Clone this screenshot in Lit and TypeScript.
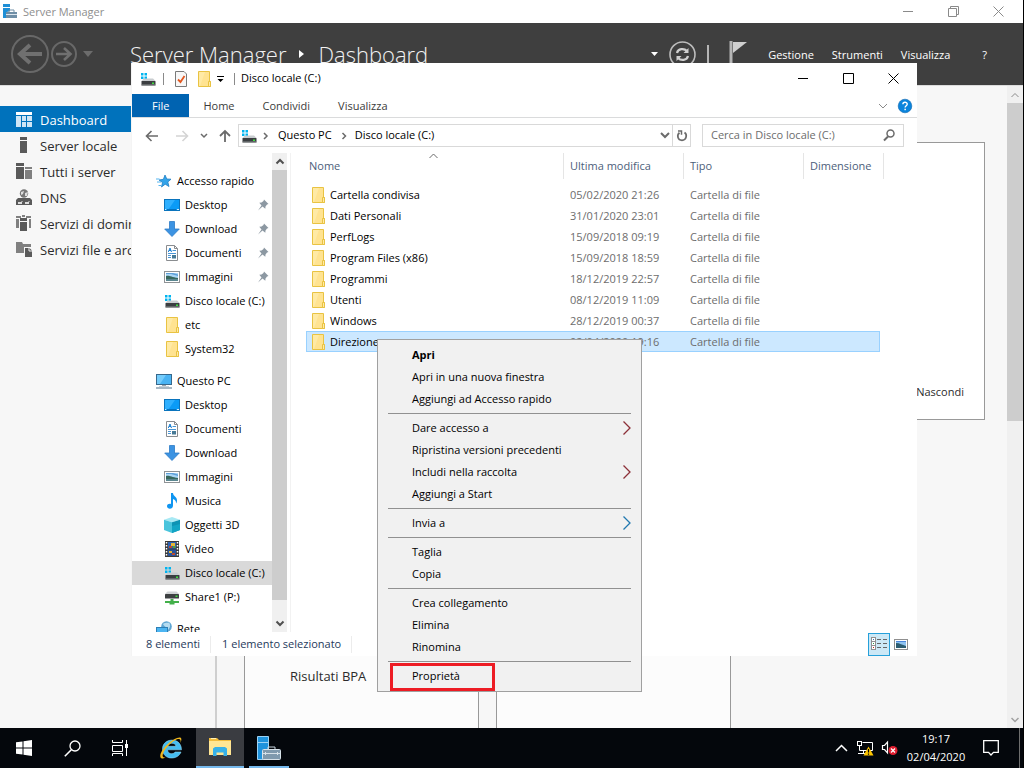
import { LitElement, html, css, svg, nothing } from "lit";
import { customElement, property } from "lit/decorators.js";
import { classMap } from "lit/directives/class-map.js";

const base = css`
  *, *::before, *::after { box-sizing: border-box; }
  button, input, a {
    font: inherit; color: inherit; background: none; border: 0; margin: 0; padding: 0;
    text-decoration: none; border-radius: 0;
  }
  button { display: inline-flex; align-items: center; justify-content: center; }
  svg { display: block; flex: none; }
`;

const icon = (w: number, h: number, body: unknown) =>
  html`<svg width=${w} height=${h} viewBox="0 0 ${w} ${h}" aria-hidden="true">${body}</svg>`;

const line = (w: number, h: number, d: string, stroke = "#000", sw = 1) =>
  icon(w, h, svg`<path d=${d} fill="none" stroke=${stroke} stroke-width=${sw}/>`);

/* ---------- file and place icons, 16 x 16 ---------- */
const icons: Record<string, () => unknown> = {
  folder: () => icon(16, 16, svg`<path d="M2.500.5H13.500V10.500H14.500V15.500H2.500Z" fill="#ffe391" stroke="#e9c342"/>
    <path d="M12.500 15.500V10.500H14.500V15.500Z" fill="#ffeaa8" stroke="#e9c342"/><path d="M3 1H9L4 15H3Z" fill="#ffeaa5"/>`),
  disk: () => icon(16, 16, svg`<path d="M1 2h2.500v2.500H1zM4.500 2H7v2.500H4.500zM1 5.500h2.500V8H1zM4.500 5.500H7V8H4.500z" fill="#00b4f0"/>
    <path d="M4 7.500H13L15.500 10H1.500Z" fill="#c9cdd0"/><rect x="1.500" y="10" width="14" height="4.500" rx=".6" fill="#3b3e41"/>
    <rect x="1.500" y="13.500" width="14" height="1" fill="#8a8d90"/><rect x="12" y="11.500" width="2" height="1.500" fill="#3fe03f"/>`),
  star: () => icon(16, 16, svg`<path d="M9 2L10.800 6 15 6.200 11.800 9 13 13.500 9.200 11.200 5.500 14 6.500 9.500 3 7 7.400 6.300Z" fill="#33a4ea" stroke="#1f7fc4" stroke-width=".8"/>
    <path d="M0 6H3.500M1 9H5M2.500 12.500H5" stroke="#54b5f0" stroke-width="1"/>`),
  desktop: () => icon(16, 16, svg`<rect x=".5" y="2.500" width="15" height="11" fill="#0a9bf7" stroke="#0a74bd"/>
    <path d="M1 3H11L4 13H1Z" fill="#2fb0ff"/><path d="M1 12.500H2M13 12.500H15" stroke="#d6efff"/><path d="M3 12.500H12" stroke="#0572c0"/>`),
  download: () => icon(16, 16, svg`<path d="M5.500.5H10.500V8H15.300L8 15.500 .7 8H5.500Z" fill="#3c93e2" stroke="#2c7bc6" stroke-width=".8"/>`),
  documents: () => icon(16, 16, svg`<path d="M2.500.5H10.500L13.500 3.500V15.500H2.500Z" fill="#fff" stroke="#8a8d90"/>
    <path d="M10.500.5V3.500H13.500" fill="none" stroke="#8a8d90"/><path d="M4.300 7L6 3 7.500 7M5 5.500H7" stroke="#1d7fd0" fill="none"/>
    <path d="M8.500 5.500H12M4 8.500H12M4 10.500H7M4 12.500H7" stroke="#4a96d6"/><rect x="8" y="10" width="4" height="3.500" fill="#477a96"/>`),
  pictures: () => icon(16, 16, svg`<rect x=".5" y="2.500" width="15" height="11" fill="#fff" stroke="#8f9396"/>
    <rect x="2" y="4" width="12" height="8" fill="#a9d5f4"/><path d="M2 7C5 6 7 8 14 9V12H2Z" fill="#38685d"/>
    <path d="M2 5H7L14 7V5.500L9 4H2Z" fill="#5e9fd8"/><path d="M2 11H14" stroke="#7fa6c4"/>`),
  pc: () => icon(16, 16, svg`<rect x=".5" y="1.500" width="15" height="10" fill="#49b3f3" stroke="#37688c"/><path d="M1 2H10L4 11H1Z" fill="#74ccfb"/>
    <path d="M6 12.500H10" stroke="#9aa5ad"/><path d="M0 15H16" stroke="#8ba0b0" stroke-width="1.500"/><path d="M3 13.500H13" stroke="#c8d2d9"/>`),
  music: () => icon(16, 16, svg`<path d="M7 0H9C9 3 13 3.500 13 7.500 13 9 12.500 10 12 10.500 12.300 7.500 10.500 6.500 9 6V12.500C9 17 3 16.500 3 13.300 3 11 5.500 10.500 7 11Z" fill="#0f95f1"/>`),
  objects: () => icon(16, 16, svg`<path d="M8 0L16 2.800 8 5.200 0 2.800Z" fill="#a8e9f4"/><path d="M0 2.800L8 5.200V16L0 13Z" fill="#49c4dc"/>
    <path d="M16 2.800L8 5.200V16L16 13Z" fill="#0e93b4"/><path d="M8 9L16 7V13L8 16Z" fill="#12a5c5"/>`),
  video: () => icon(16, 16, svg`<rect x="1" y="0" width="14" height="16" fill="#3a3a3a"/>
    <path d="M2.500 1V16M13.500 1V16" stroke="#fff" stroke-width="1.500" stroke-dasharray="1.500 1.500"/>
    <rect x="4" y="1" width="8" height="6.500" fill="#2e62b4"/><rect x="4" y="8.500" width="8" height="6.500" fill="#27539c"/>
    <path d="M7 2H11V5H7ZM5 10H8V12H5Z" fill="#e5b735"/><path d="M5 5H8V7H5ZM8 12H11V14H8Z" fill="#b84a32"/><path d="M9 5H11.500V7H9Z" fill="#4fa045"/>`),
  share: () => icon(16, 16, svg`<path d="M3.500 2.500H12.500L15 5H1Z" fill="#d0d3d5"/><rect x="1" y="5" width="14" height="4.500" rx=".6" fill="#3d4042"/>
    <rect x="11.500" y="6.500" width="2" height="1.500" fill="#43e043"/><path d="M6.500 10H9.500V12H15V14H10.500V15.500H5.500V14H1V12H6.500Z" fill="#43b04a"/>`),
  network: () => icon(16, 16, svg`<circle cx="10.500" cy="5.500" r="5.300" fill="#5ea5d2"/><path d="M7 3C9 1 12 2 13 1.500 15 4 14 7 12 9 12 6 8 6 7 3Z" fill="#b6dcf0"/>
    <rect x=".5" y="6.500" width="11" height="7" fill="#4cb5f2" stroke="#2d7fb5"/><path d="M2 15.500H10" stroke="#8ba0b0"/>`),
};

const pin = () => icon(12, 12, svg`<path d="M7 0.500L11.500 5 10 5.500 8.500 7.500 8.300 9.800 5.500 7.500 1 11.500 4.500 6.500 2.300 3.800 4.500 3.500 6.500 2Z" fill="#8c98a2"/>`);

@customElement("server-manager")
class ServerManager extends LitElement {
  static styles = [base, css`
    :host { display: flex; flex-direction: column; height: 100%; background: #f7f7f7; color: #2b2b2b; overflow: hidden; }
    .caption { display: flex; align-items: center; height: 23px; padding: 0 2px 0 3px; background: #fff; color: #8e8e8e; }
    .caption span { flex: 1; padding-left: 5px; }
    .win { width: 45px; height: 20px; }
    .head { display: flex; align-items: center; height: 63px; padding-left: 11px; background: #3f3f3f; border-bottom: 1px solid #dcdcdc; color: #fff; }
    .arrows { display: flex; align-items: center; gap: 2px; width: 119px; }
    .crumb { display: flex; align-items: center; gap: 13px; flex: 1; font-size: 22px; font-weight: 300; color: #f2f2f2; }
    .tools { display: flex; align-items: center; gap: 11px; padding-right: 14px; }
    .menus { display: flex; align-items: center; gap: 18px; padding-right: 36px; }
    .menus button:last-child { margin-left: 14px; }
    .body { display: flex; flex: 1; min-height: 0; }
    .side { width: 217px; flex: none; padding-top: 20px; border-right: 2px solid #cfcfcf; }
    .side a { display: flex; align-items: center; gap: 8px; height: 26px; padding-left: 16px; font-size: 13px; white-space: nowrap; }
    .side a span { padding-top: 2px; }
    .side a.on { background: #0072bc; color: #fff; }
    .main { flex: 1; min-width: 0; padding: 56px 22px 0 27px; overflow: hidden; display: flex; flex-direction: column; gap: 20px; }
    .welcome { height: 278px; flex: none; background: #fff; border: 1px solid #999; display: flex; align-items: flex-end; justify-content: flex-end; padding: 0 20px 20px; }
    .cards { display: grid; grid-template-columns: repeat(auto-fill, 235px); gap: 17px; }
    .card { height: 400px; background: #fcfcfc; border: 1px solid #999; padding: 226px 0 0 45px; font-size: 13px; }
    .bar { width: 16px; flex: none; background: #f0f0f0; display: flex; flex-direction: column; }
    .bar button { height: 17px; }
    .bar .thumb { height: 318px; background: #cdcdcd; }
    .bar .space { flex: 1; }
  `];

  render() {
    const g = "#5a5a5a";
    const side: [string, unknown][] = [
      ["Dashboard", svg`<path d="M0 1H16V4H0Z" fill="#fff"/><path d="M0 5H5V16H0ZM6 5H10V10H6ZM11 5H16V10H11ZM6 11H10V16H6ZM11 11H16V16H11Z" fill="#cfe6f6"/>`],
      ["Server locale", svg`<path d="M4 0H11V3H4ZM4 4H11V16H4Z" fill=${g}/>`],
      ["Tutti i server", svg`<path d="M0 0H8V3H0ZM0 4H8V16H0Z" fill=${g}/><path d="M9 4H16V6H9ZM9 7H16V16H9Z" fill="#808080"/>`],
      ["DNS", svg`<circle cx="8" cy="4.500" r="4.200" fill="#777"/><path d="M5 3L8 2 7 5 5 6ZM9 4L12 3 11 7 9 7Z" fill="#ddd"/><path d="M2 9H14L16 11V16H0V11Z" fill=${g}/><path d="M2 13H6V15H2ZM9 13H13V15H9Z" fill="#ddd"/><path d="M6 12V13M13 12V13" stroke="#ddd"/>`],
      ["Servizi di dominio Active Directory", svg`<path d="M0 1H5V3H0ZM0 4H3V13H0ZM10 1H15V3H10ZM13 4H15V13H13Z" fill="#808080"/><path d="M4 3H11V6H4ZM4 7H11V16H4Z" fill=${g}/><path d="M6 0H9V2H6Z" fill="#808080"/>`],
      ["Servizi file e archiviazione", svg`<path d="M0 1H6L7 3H15V6H8V12H0Z" fill="#808080"/><path d="M9 7H13.500L16 9.500V16H9Z" fill=${g}/><path d="M13 7V10H16" fill="none" stroke="#eee"/>`],
    ];
    return html`
      <div class="caption">
        ${icon(15, 15, svg`<path d="M0 0H7V3H0ZM0 4H7V7L4 8V14H0Z" fill="#1e8fd6"/><path d="M3 8H14V14H3Z" fill="#6f8ea6"/><path d="M6 8V6H11V8" fill="none" stroke="#6f8ea6"/><path d="M3 10.500H14" stroke="#dce6ee"/>`)}
        <span>Server Manager</span>
        <button class="win" aria-label="Riduci a icona">${line(11, 11, "M0 5.5H10", "#8a8a8a")}</button>
        <button class="win" aria-label="Ripristina">${line(11, 11, "M0.5 2.500H8.500V10.500H0.500ZM2.500 2.500V0.500H10.500V8.500H8.500", "#8a8a8a")}</button>
        <button class="win" aria-label="Chiudi">${line(11, 11, "M0.5 0.500L10.500 10.500M10.500 0.500L0.500 10.500", "#8a8a8a")}</button>
      </div>
      <header class="head">
        <div class="arrows">
          <button aria-label="Indietro">${icon(38, 38, svg`<circle cx="19" cy="19" r="18" fill="none" stroke="#686868" stroke-width="2"/><path d="M31 19H10M19 10L9 19L19 28" fill="none" stroke="#707070" stroke-width="4"/>`)}</button>
          <button aria-label="Avanti">${icon(26, 26, svg`<circle cx="13" cy="13" r="12" fill="none" stroke="#686868" stroke-width="2"/><path d="M5 13H19M13 7L19.500 13L13 19" fill="none" stroke="#707070" stroke-width="2.600"/>`)}</button>
          <button aria-label="Cronologia">${icon(18, 8, svg`<path d="M4 1H14L9 7Z" fill="#6c6c6c"/>`)}</button>
        </div>
        <div class="crumb"><span>Server Manager</span>${icon(6, 8, svg`<path d="M0 0L5 4 0 8Z" fill="#fff"/>`)}<span>Dashboard</span></div>
        <div class="tools">
          ${icon(7, 5, svg`<path d="M0 0H7L3.500 4Z" fill="#fff"/>`)}
          <button aria-label="Aggiorna">${icon(27, 27, svg`<circle cx="13.500" cy="13.500" r="12.500" fill="none" stroke="#bdbdbd" stroke-width="1.600"/><path d="M8 12C9 7.500 15 7 18 10M19 15C18 19.500 12 20 9 17" fill="none" stroke="#d0d0d0" stroke-width="2.200"/><path d="M19.500 7V12H14.500ZM7.500 20V15H12.500Z" fill="#d0d0d0"/>`)}</button>
          ${line(2, 18, "M1 0V18", "#b5b5b5", 2)}
          <button aria-label="Notifiche">${icon(34, 28, svg`<path d="M11 1V28" stroke="#b5b5b5" stroke-width="3"/><path d="M13 2H27L13 13Z" fill="#cfcfcf"/>`)}</button>
        </div>
        <div class="menus"><button>Gestione</button><button>Strumenti</button><button>Visualizza</button><button>?</button></div>
      </header>
      <div class="body">
        <nav class="side">
          ${side.map(([label, art], i) => html`<a href="#" class=${classMap({ on: i === 0 })}>${icon(16, 16, art)}<span>${label}</span></a>`)}
        </nav>
        <main class="main">
          <section class="welcome"><button>Nascondi</button></section>
          <div class="cards"><section class="card">Risultati BPA</section><section class="card"></section></div>
        </main>
        <div class="bar">
          <button aria-label="Su">${line(8, 6, "M0.500 5L4 1.500L7.500 5", "#8a8a8a", 1)}</button>
          <div class="thumb"></div><div class="space"></div>
          <button aria-label="Giù">${line(8, 6, "M0.500 1L4 4.500L7.500 1", "#a0a0a0", 1.5)}</button>
        </div>
      </div>`;
  }
}

type Place = { label: string; icon: string; root?: boolean; pinned?: boolean; on?: boolean };
const places: Place[] = [
  { label: "Accesso rapido", icon: "star", root: true },
  { label: "Desktop", icon: "desktop", pinned: true },
  { label: "Download", icon: "download", pinned: true },
  { label: "Documenti", icon: "documents", pinned: true },
  { label: "Immagini", icon: "pictures", pinned: true },
  { label: "Disco locale (C:)", icon: "disk" },
  { label: "etc", icon: "folder" },
  { label: "System32", icon: "folder" },
  { label: "Questo PC", icon: "pc", root: true },
  { label: "Desktop", icon: "desktop" },
  { label: "Documenti", icon: "documents" },
  { label: "Download", icon: "download" },
  { label: "Immagini", icon: "pictures" },
  { label: "Musica", icon: "music" },
  { label: "Oggetti 3D", icon: "objects" },
  { label: "Video", icon: "video" },
  { label: "Disco locale (C:)", icon: "disk", on: true },
  { label: "Share1 (P:)", icon: "share" },
  { label: "Rete", icon: "network", root: true },
];
const files: [string, string][] = [
  ["Cartella condivisa", "05/02/2020 21:26"],
  ["Dati Personali", "31/01/2020 23:01"],
  ["PerfLogs", "15/09/2018 09:19"],
  ["Program Files (x86)", "15/09/2018 18:59"],
  ["Programmi", "18/12/2019 22:57"],
  ["Utenti", "08/12/2019 11:09"],
  ["Windows", "28/12/2019 00:37"],
  ["Direzione", "02/04/2020 19:16"],
];

@customElement("file-explorer")
class FileExplorer extends LitElement {
  static styles = [base, css`
    :host { display: flex; flex-direction: column; background: #fff; color: #000; overflow: hidden; border-left: 1px solid #f4f4f4; white-space: nowrap; }
    .caption { display: flex; align-items: center; height: 31px; padding: 0 1px 0 8px; flex: none; }
    .caption .gap { flex: 1; }
    .rule { width: 1px; height: 12px; background: #8a8a8a; margin: 0 5px 0 7px; }
    .quick { width: 23px; height: 20px; }
    .quick.more { width: 12px; }
    .title { padding: 0 0 2px 1px; }
    .win { width: 45px; height: 30px; }
    .tabs { display: flex; height: 24px; border-bottom: 1px solid #dadbdc; flex: none; color: #3b3b3b; }
    .tabs button { padding: 0 14px; }
    .tabs .file { background: #0063b1; color: #fff; padding: 0 20px; }
    .tabs .gap { flex: 1; }
    .tabs .icon { padding: 0 4px 0 5px; }
    .go { display: flex; align-items: center; height: 35px; padding: 0 13px 0 12px; flex: none; }
    .go .step { width: 15px; margin-right: 15px; height: 20px; }
    .go .step.wide { margin-right: 11px; }
    .go .step.last { margin-right: 6px; }
    .go .recent { margin-right: 9px; }
    .box { display: flex; align-items: center; height: 23px; border: 1px solid #d9d9d9; }
    .address { flex: 1; padding-left: 2px; }
    .address .crumb { padding: 0 9px 2px 8px; }
    .address .gap { flex: 1; }
    .address .chev { width: 14px; }
    .address .reload { width: 18px; height: 21px; border-left: 1px solid #d9d9d9; }
    .search { width: 202px; margin-left: 11px; padding: 0 8px; }
    .search input { flex: 1; min-width: 0; outline: 0; padding-bottom: 2px; }
    .search input::placeholder { color: #6d6d6d; opacity: 1; }
    .body { display: flex; flex: 1; min-height: 0; }
    .places { width: 140px; flex: none; padding-top: 16px; overflow: hidden; }
    .places a { display: flex; align-items: center; gap: 5px; height: 24px; padding-left: 32px; }
    .places a.root { padding-left: 24px; margin-top: 8px; }
    .places a.root:first-child { margin-top: 0; }
    .places a.on { background: #d9d9d9; }
    .places span { flex: 1; padding-bottom: 2px; }
    .places .pin { flex: none; width: 15px; }
    .bar { width: 15px; flex: none; background: #f0f0f0; display: flex; flex-direction: column; }
    .bar button { height: 17px; flex: none; }
    .bar .thumb { flex: 1; background: #cdcdcd; }
    .bar .space { height: 15px; }
    .list { flex: 1; min-width: 0; margin-left: 3px; border-left: 1px solid #f2f2f2; padding-left: 15px; }
    table { display: block; }
    thead, tbody { display: block; }
    tr { display: grid; grid-template-columns: 257px 120px 120px 75px; width: max-content; }
    thead tr { grid-template-columns: 258px 120px 120px 80px; margin-bottom: 5px; }
    th { position: relative; height: 26px; line-height: 26px; font-weight: 400; text-align: left; padding: 0 0 0 6px; color: #4c607a; border-right: 1px solid #e5e5e5; }
    th:first-child { padding-left: 3px; }
    .sort { position: absolute; left: 123px; top: 0; }
    td { display: flex; align-items: center; height: 19px; padding: 0 0 0 6px; color: #6d6d6d; }
    td:first-child { padding-left: 3px; gap: 4px; color: #000; }
    tbody tr { border: 1px solid transparent; }
    tbody tr.on { background: #cce8ff; border-color: #99d1ff; }
    .status { display: flex; align-items: center; height: 24px; padding: 0 5px 0 14px; flex: none; color: #1e395b; }
    .status p { margin: 0 11px 0 0; padding: 0 10px 2px 0; border-right: 1px solid #ececec; }
    .status .gap { flex: 1; }
    .view { width: 22px; height: 23px; }
    .view.on { background: #cce8f6; border: 1px solid #26a0da; }
  `];

  render() {
    return html`
      <div class="caption">
        ${icons.disk()}
        <i class="rule"></i>
        <button class="quick" aria-label="Proprietà">${icon(14, 16, svg`<path d="M1.500.5H10L12.500 3V15.500H1.500Z" fill="#f7f7f7" stroke="#7a7a7a"/><path d="M4 8.500L6.500 11L10.500 5" fill="none" stroke="#e2571e" stroke-width="1.800"/>`)}</button>
        <button class="quick" aria-label="Nuova cartella">${icons.folder()}</button>
        <button class="quick more" aria-label="Personalizza">${icon(8, 8, svg`<path d="M0 1H7V2H0ZM0.500 4H6.500L3.500 7Z" fill="#000"/>`)}</button>
        <i class="rule"></i>
        <span class="title">Disco locale (C:)</span>
        <span class="gap"></span>
        <button class="win" aria-label="Riduci a icona">${line(11, 11, "M0 5.500H10")}</button>
        <button class="win" aria-label="Ingrandisci">${line(11, 11, "M0.500 0.500H10.500V10.500H0.500Z")}</button>
        <button class="win" aria-label="Chiudi">${line(11, 11, "M0.500 0.500L10.500 10.500M10.500 0.500L0.500 10.500")}</button>
      </div>
      <div class="tabs">
        <button class="file">File</button><button>Home</button><button>Condividi</button><button>Visualizza</button>
        <span class="gap"></span>
        <button class="icon" aria-label="Espandi barra multifunzione">${line(10, 6, "M1 1L5 5L9 1", "#8a8a8a")}</button>
        <button class="icon" aria-label="Guida">${icon(16, 16, svg`<circle cx="8" cy="8" r="6.800" fill="#0a84dc" stroke="#0b64ae" stroke-width=".6"/><path d="M5.900 6.300C5.900 3.600 10.200 3.700 10.200 6.200C10.200 7.800 8.100 7.800 8.100 9.600" fill="none" stroke="#fff" stroke-width="1.400"/><rect x="7.400" y="10.700" width="1.500" height="1.500" fill="#fff"/>`)}</button>
      </div>
      <div class="go">
        <button class="step" aria-label="Indietro">${line(14, 12, "M13 6H1.500M6.500 1L1.500 6L6.500 11", "#6b6b6b", 1.6)}</button>
        <button class="step wide" aria-label="Avanti">${line(14, 12, "M1 6H12.500M7.500 1L12.500 6L7.500 11", "#d4d4d4", 1.6)}</button>
        <button class="recent" aria-label="Percorsi recenti">${line(8, 6, "M1 1L4 4L7 1", "#6b6b6b", 1.5)}</button>
        <button class="step last" aria-label="Su">${line(12, 14, "M6 13V2M1 7L6 2L11 7", "#6b6b6b", 1.8)}</button>
        <div class="box address">
          ${icons.disk()}
          ${line(13, 8, "M7 1L10 4L7 7", "#6b6b6b", 1.5)}
          <button class="crumb">Questo PC</button>
          ${line(6, 8, "M1.500 1L4.500 4L1.500 7", "#6b6b6b", 1.5)}
          <button class="crumb">Disco locale (C:)</button>
          <span class="gap"></span>
          <button class="chev" aria-label="Percorsi precedenti">${line(10, 7, "M1 1L5 5L9 1", "#6b6b6b", 2)}</button>
          <button class="reload" aria-label="Aggiorna">${icon(12, 13, svg`<path d="M8.500 3.500C11.500 5.500 10.500 11.300 6 11.300C1.500 11.300 .6 6 3.500 3.800" fill="none" stroke="#6b6b6b" stroke-width="1.700"/><path d="M2 2H5.500V5.800" fill="none" stroke="#6b6b6b" stroke-width="1.500"/>`)}</button>
        </div>
        <label class="box search"><input type="text" aria-label="Cerca" placeholder="Cerca in Disco locale (C:)">
          ${icon(12, 13, svg`<circle cx="7.500" cy="4.500" r="3.500" fill="none" stroke="#6b6b6b" stroke-width="1.500"/><path d="M5 7.500L1 11.500" stroke="#6b6b6b" stroke-width="2"/>`)}
        </label>
      </div>
      <div class="body">
        <nav class="places">
          ${places.map((p) => html`<a href="#" class=${classMap({ root: !!p.root, on: !!p.on })}>${icons[p.icon]()}<span>${p.label}</span>${p.pinned ? html`<i class="pin">${pin()}</i>` : nothing}</a>`)}
        </nav>
        <div class="bar">
          <button aria-label="Su">${line(10, 7, "M1.500 5.500L5 2L8.500 5.500", "#505050", 2)}</button>
          <div class="thumb"></div><div class="space"></div>
          <button aria-label="Giù">${line(10, 7, "M1.500 1.500L5 5L8.500 1.500", "#505050", 2)}</button>
        </div>
        <div class="list">
          <table>
            <thead><tr>
              <th>Nome<span class="sort">${line(9, 6, "M0.500 5L4.500 1L8.500 5", "#6b6b6b")}</span></th>
              <th>Ultima modifica</th><th>Tipo</th><th>Dimensione</th>
            </tr></thead>
            <tbody>
              ${files.map(([name, date], i) => html`<tr class=${classMap({ on: i === files.length - 1 })}>
                <td>${icons.folder()}${name}</td><td>${date}</td><td>Cartella di file</td><td></td></tr>`)}
            </tbody>
          </table>
        </div>
      </div>
      <footer class="status">
        <p>8 elementi</p><p>1 elemento selezionato</p>
        <span class="gap"></span>
        <button class="view on" aria-label="Dettagli">${icon(16, 14, svg`<rect x=".5" y=".5" width="4" height="12" fill="#fff" stroke="#8f8f8f"/><path d="M0 4.500H5M0 8.500H5" stroke="#8f8f8f"/><path d="M2 2.500H3" stroke="#3a7ab8"/><path d="M2 6.500H3" stroke="#2a9a4a"/><path d="M2 10.500H3" stroke="#c22"/><path d="M6 2.500H10M12 2.500H16M6 6.500H10M12 6.500H16M6 10.500H10M12 10.500H16" stroke="#666"/>`)}</button>
        <button class="view" aria-label="Icone grandi">${icon(14, 11, svg`<rect x=".5" y=".5" width="13" height="10" fill="#fff" stroke="#8f8f8f"/><rect x="2" y="2" width="10" height="7" fill="#8fc3f0"/><path d="M2 4C6 4 8 6 12 7V9H2Z" fill="#2c5c70"/><path d="M2 2.500H12" stroke="#4a86dd"/>`)}</button>
      </footer>`;
  }
}

@customElement("context-menu")
class ContextMenu extends LitElement {
  static styles = [base, css`
    :host { display: block; background: #f1f1f1; border: 1px solid #a0a0a0; padding: 4px 0; color: #000; white-space: nowrap; }
    button { display: flex; justify-content: space-between; width: 100%; height: 22px; padding: 0 10px 0 34px; }
    span { padding-bottom: 2px; }
    .main { font-weight: 700; }
    hr { border: 0; border-top: 1px solid #919191; margin: 3px 10px; }
    .marked { position: relative; }
    .marked::after { content: ""; position: absolute; left: 12px; top: -2px; width: 105px; height: 28px; border: 3px solid #ed1c24; }
  `];
  @property({ attribute: false }) groups: string[][] = [
    ["Apri", "Apri in una nuova finestra", "Aggiungi ad Accesso rapido"],
    ["Dare accesso a>", "Ripristina versioni precedenti", "Includi nella raccolta>", "Aggiungi a Start"],
    ["Invia a>"],
    ["Taglia", "Copia"],
    ["Crea collegamento", "Elimina", "Rinomina"],
    ["Proprietà"],
  ];
  render() {
    return this.groups.map((group, g) => html`${g ? html`<hr>` : nothing}${group.map((text) => html`
      <button class=${classMap({ main: text === "Apri", marked: text === "Proprietà" })}><span>${text.replace(">", "")}</span>${text.endsWith(">") ? line(8, 14, "M0.500 0.500L7 7L0.500 13.500", g === 1 ? "#8c3038" : "#2078b0", 1.3) : nothing}</button>`)}`);
  }
}

@customElement("task-bar")
class TaskBar extends LitElement {
  static styles = [base, css`
    :host { display: flex; height: 40px; background: #04070c; color: #fff; }
    .app { width: 48px; height: 40px; margin-right: 1px; }
    .sys { width: 48px; height: 40px; }
    .group { display: flex; margin-left: 3px; }
    .open { background: #3a3c41; border-bottom: 2px solid #76b9ed; }
    .running { background: linear-gradient(#76b9ed, #76b9ed) center bottom / 40px 2px no-repeat; }
    .gap { flex: 1; }
    .tray { display: flex; align-items: center; }
    .tray button { width: 24px; height: 40px; }
    .tray .clock { display: grid; width: 70px; margin-right: 3px; line-height: 18px; text-align: center; align-content: center; }
    .tray .notes { width: 34px; }
    .edge { width: 4px; margin-left: 11px; border-left: 1px solid #6e6e6e; }
  `];
  render() {
    return html`
      <button class="sys" aria-label="Start">${icon(16, 16, svg`<path d="M0 2.300L6.500 1.400V7.500H0ZM7.500 1.200L16 0V7.500H7.500ZM0 8.500H6.500V14.600L0 13.700ZM7.500 8.500H16V16L7.500 14.800Z" fill="#fff"/>`)}</button>
      <button class="sys" aria-label="Cerca">${icon(17, 17, svg`<circle cx="11" cy="6" r="5" fill="none" stroke="#fff" stroke-width="1.300"/><path d="M7.300 9.700L.8 16.200" stroke="#fff" stroke-width="1.600"/>`)}</button>
      <button class="sys" aria-label="Visualizzazione attività">${icon(17, 16, svg`<path d="M.5 0V2.500H10.500V0M.5 16V13.500H10.500V16M.5 5.500H10.500V11.500H.5ZM14.500 0V16" fill="none" stroke="#fff"/><rect x="13" y="4" width="3" height="4" fill="#fff"/>`)}</button>
      <div class="group">
        <button class="app" aria-label="Internet Explorer">${icon(24, 24, svg`<path d="M22.500 13.800H8.500C8.700 18.200 14.500 18.800 16 16H22C19 24.500 3.500 24.500 3.500 13C3.500 1.500 22.500 .5 22.500 13.800ZM8.700 10.300H17C16.500 6.300 9.300 6.300 8.700 10.300Z" fill="#45bdf0" stroke="#9be1fb" stroke-width=".5"/>
          <path d="M21.500 7C23.500 2 22 .5 18 2C12 4 3.500 12 1.500 18C.3 22.500 3 23.500 6.500 21.500C4 22 3 20.500 4 17.500C6 12.500 13 5 18 3.300C21 2.200 22 3.500 21.500 7Z" fill="#f2b91f"/>`)}</button>
        <button class="app open" aria-label="Esplora file">${icon(24, 20, svg`<path d="M1 1H9L11 3H23V18H1Z" fill="#f2bd3d"/><path d="M1 4H23V18H1Z" fill="#ffe694"/><path d="M3 1.500H8" stroke="#fff1b8"/><path d="M5 19V11.500L7 10H17L19 11.500V19H15.500V15.500H8.500V19Z" fill="#37b1e8"/>`)}</button>
        <button class="app running" aria-label="Server Manager">${icon(26, 26, svg`<path d="M1.500 1.500H12.500V24.500H1.500Z" fill="#1f93dd" stroke="#9bd2f5"/><path d="M1.500 7.500H12.500" stroke="#9bd2f5"/><rect x="6.500" y="14.500" width="18" height="10" rx="1" fill="#7f99ad" stroke="#d7e1e8"/><path d="M12 14V12H19V14" fill="none" stroke="#c8d6e0"/><path d="M7 18.500H24M9.500 17V20M21.500 17V20" stroke="#d7e1e8"/>`)}</button>
      </div>
      <span class="gap"></span>
      <div class="tray">
        <button aria-label="Mostra icone nascoste">${line(13, 8, "M1 7L6.500 1.500L12 7", "#fff", 1.5)}</button>
        <button aria-label="Rete">${icon(17, 16, svg`<path d="M5.500 2.500H15.500V10.500H2.500V5M1 13.500H11M6.500 10.500V13.500" fill="none" stroke="#fff"/><rect x=".5" y="1.500" width="4" height="4" fill="#04070c" stroke="#fff"/><path d="M11.500 6.500L16.500 15.500H6.500Z" fill="#fdc500"/><path d="M11.500 9V12.500M11.500 13.500V14.700" stroke="#000" stroke-width="1.200"/>`)}</button>
        <button aria-label="Volume">${icon(17, 16, svg`<path d="M1.500 5.500H3.500L6.500 2V13L3.500 9.500H1.500Z" fill="none" stroke="#fff" stroke-width="1.200"/><circle cx="12" cy="10.500" r="4.500" fill="#e01e30"/><path d="M10 8.500L14 12.500M14 8.500L10 12.500" stroke="#fff" stroke-width="1.200"/>`)}</button>
        <button class="clock"><span>19:17</span><span>02/04/2020</span></button>
        <button class="notes" aria-label="Notifiche">${line(16, 16, "M.7 .7H15.300V12.300H10.500L8 15L5.500 12.300H.7Z", "#fff", 1.3)}</button>
      </div>
      <div class="edge"></div>`;
  }
}

@customElement("app-root")
class AppRoot extends LitElement {
  static styles = [base, css`
    :host { display: flex; flex-direction: column; height: 100vh; padding-right: 1px; background: #000; overflow: hidden; font-family: "Open Sans", "Noto Sans", sans-serif; font-size: 11px; box-sizing: border-box; }
    .desktop { position: relative; flex: 1; min-height: 0; }
    file-explorer { position: absolute; inset: 63px 106px 72px 131px; }
    context-menu { position: absolute; left: 377px; top: 339px; width: 265px; }
    task-bar { flex: none; }
  `];
  render() {
    return html`
      <div class="desktop"><server-manager></server-manager><file-explorer></file-explorer><context-menu></context-menu></div>
      <task-bar></task-bar>`;
  }
}
